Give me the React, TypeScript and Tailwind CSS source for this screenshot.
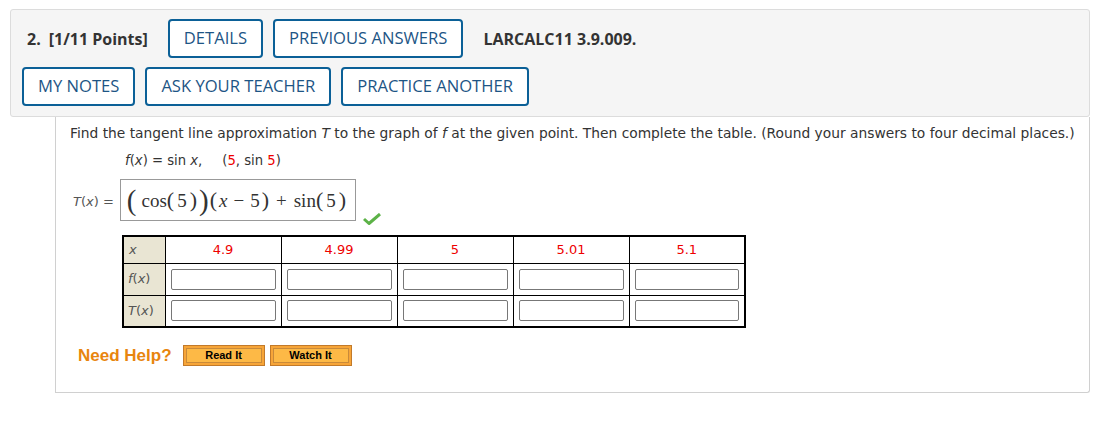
import React from "react";

const xs = ["4.9", "4.99", "5", "5.01", "5.1"];

function Btn({ children }: { children: React.ReactNode }) {
  return (
    <button className="h-[39px] px-[14px] border-2 border-[#0b6097] rounded-[4px] bg-white text-[16.6px] text-[#1d5585] font-['Open_Sans',sans-serif] leading-none whitespace-nowrap">
      {children}
    </button>
  );
}

function HelpBtn({ children }: { children: React.ReactNode }) {
  return (
    <button className="h-[21px] w-[82px] bg-[#f7a538] border border-[#c27a2a] p-[2px]">
      <span className="flex h-full items-center justify-center bg-[#fdb946] border border-[#c98a3a] text-[11px] font-bold text-black font-['Liberation_Sans',Arial,sans-serif] leading-none">
        {children}
      </span>
    </button>
  );
}

export default function App() {
  return (
    <div className="bg-white w-[1096px] h-[429px] pt-[9px] pl-[10px] pr-[6px] font-['DejaVu_Sans',Verdana,sans-serif]">
      {/* Header */}
      <div className="bg-[#f5f5f5] border border-[#dcdcdc] rounded-[3px] pt-[9px] pb-[10px] px-[11px] flex flex-col gap-[9px]">
        <div className="flex items-center">
          <span className="ml-[5px] font-['Open_Sans',sans-serif] font-bold text-[16px] text-[#333]">2.</span>
          <span className="ml-[8px] font-['Open_Sans',sans-serif] font-bold text-[16px] text-[#333]">[1/11 Points]</span>
          <div className="ml-[20px] flex gap-[10px]">
            <Btn>DETAILS</Btn>
            <Btn>PREVIOUS ANSWERS</Btn>
          </div>
          <span className="ml-[20px] font-['Open_Sans',sans-serif] font-bold text-[16px] text-[#333]">LARCALC11 3.9.009.</span>
        </div>
        <div className="flex gap-[10px]">
          <Btn>MY NOTES</Btn>
          <Btn>ASK YOUR TEACHER</Btn>
          <Btn>PRACTICE ANOTHER</Btn>
        </div>
      </div>

      {/* Question */}
      <div className="ml-[45px] h-[276px] border-l border-r border-b border-[#d0d0d0] rounded-br-[3px] pl-[14px] pt-[8px]">
        <p className="text-[13.8px] text-[#333] leading-[16px]">
          Find the tangent line approximation <i>T</i> to the graph of <i>f</i> at the given point. Then complete the table. (Round your answers to four decimal places.)
        </p>
        <p className="mt-[12px] ml-[55px] text-[13.2px] text-[#333] leading-[16px]">
          <i>f</i>(<i>x</i>) = sin <i>x</i>,<span className="ml-[20px]">(<span className="text-[#e00]">5</span>, sin <span className="text-[#e00]">5</span>)</span>
        </p>
        <div className="mt-[10px] flex items-start">
          <span className="mt-[15px] ml-[3px] text-[13px] text-[#555] leading-[16px]"><i>T</i>(<i>x</i>) =</span>
          <div className="ml-[6px] w-[236px] h-[42px] border border-[#999] flex items-center pl-[6px] font-['Liberation_Serif','DejaVu_Serif',serif] text-[19px] text-[#333] leading-none">
            <span className="text-[29px] font-light">(</span>
            <span className="ml-[5px]">cos</span>
            <span className="text-[22px]">(</span>
            <span className="mx-[3px]">5</span>
            <span className="text-[22px]">)</span>
            <span className="ml-[2px] text-[29px] font-light">)</span>
            <span className="ml-[1px] text-[22px]">(</span>
            <i className="ml-[2px]">x</i>
            <span className="mx-[6px]">−</span>
            <span>5</span>
            <span className="ml-[2px] text-[22px]">)</span>
            <span className="mx-[7px]">+</span>
            <span>sin</span>
            <span className="text-[22px]">(</span>
            <span className="mx-[3px]">5</span>
            <span className="text-[22px]">)</span>
          </div>
          <svg className="ml-[7px] mt-[34px]" width="18" height="12" viewBox="0 0 18 12">
            <path d="M1 6 L6 10.5 L17 1" fill="none" stroke="#5cb247" strokeWidth="3" strokeLinejoin="round" />
          </svg>
        </div>

        <table className="mt-[10px] ml-[52px] border-collapse border-2 border-black text-[13px]">
          <tbody>
            <tr className="h-[27px]">
              <td className="w-[42px] bg-[#e9e5d3] border border-black pl-[5px] text-[#555] italic">x</td>
              {xs.map((v) => (
                <td key={v} className="w-[116px] border border-black text-center text-[#e00]">{v}</td>
              ))}
            </tr>
            {["f", "T"].map((n) => (
              <tr key={n} className="h-[32px]">
                <td className="bg-[#e9e5d3] border border-black pl-[4px] text-[#555]">
                  <i>{n}</i>(<i>x</i>)
                </td>
                {xs.map((v) => (
                  <td key={v} className="border border-black px-[5px]">
                    <div className="h-[21px] border border-[#777] rounded-[2px] bg-white" />
                  </td>
                ))}
              </tr>
            ))}
          </tbody>
        </table>

        <div className="mt-[15px] ml-[8px] flex items-center">
          <span className="font-['Liberation_Sans',Arial,sans-serif] font-bold text-[17px] text-[#e8850e]">Need Help?</span>
          <div className="ml-[11px] flex gap-[5px]">
            <HelpBtn>Read It</HelpBtn>
            <HelpBtn>Watch It</HelpBtn>
          </div>
        </div>
      </div>
    </div>
  );
}
